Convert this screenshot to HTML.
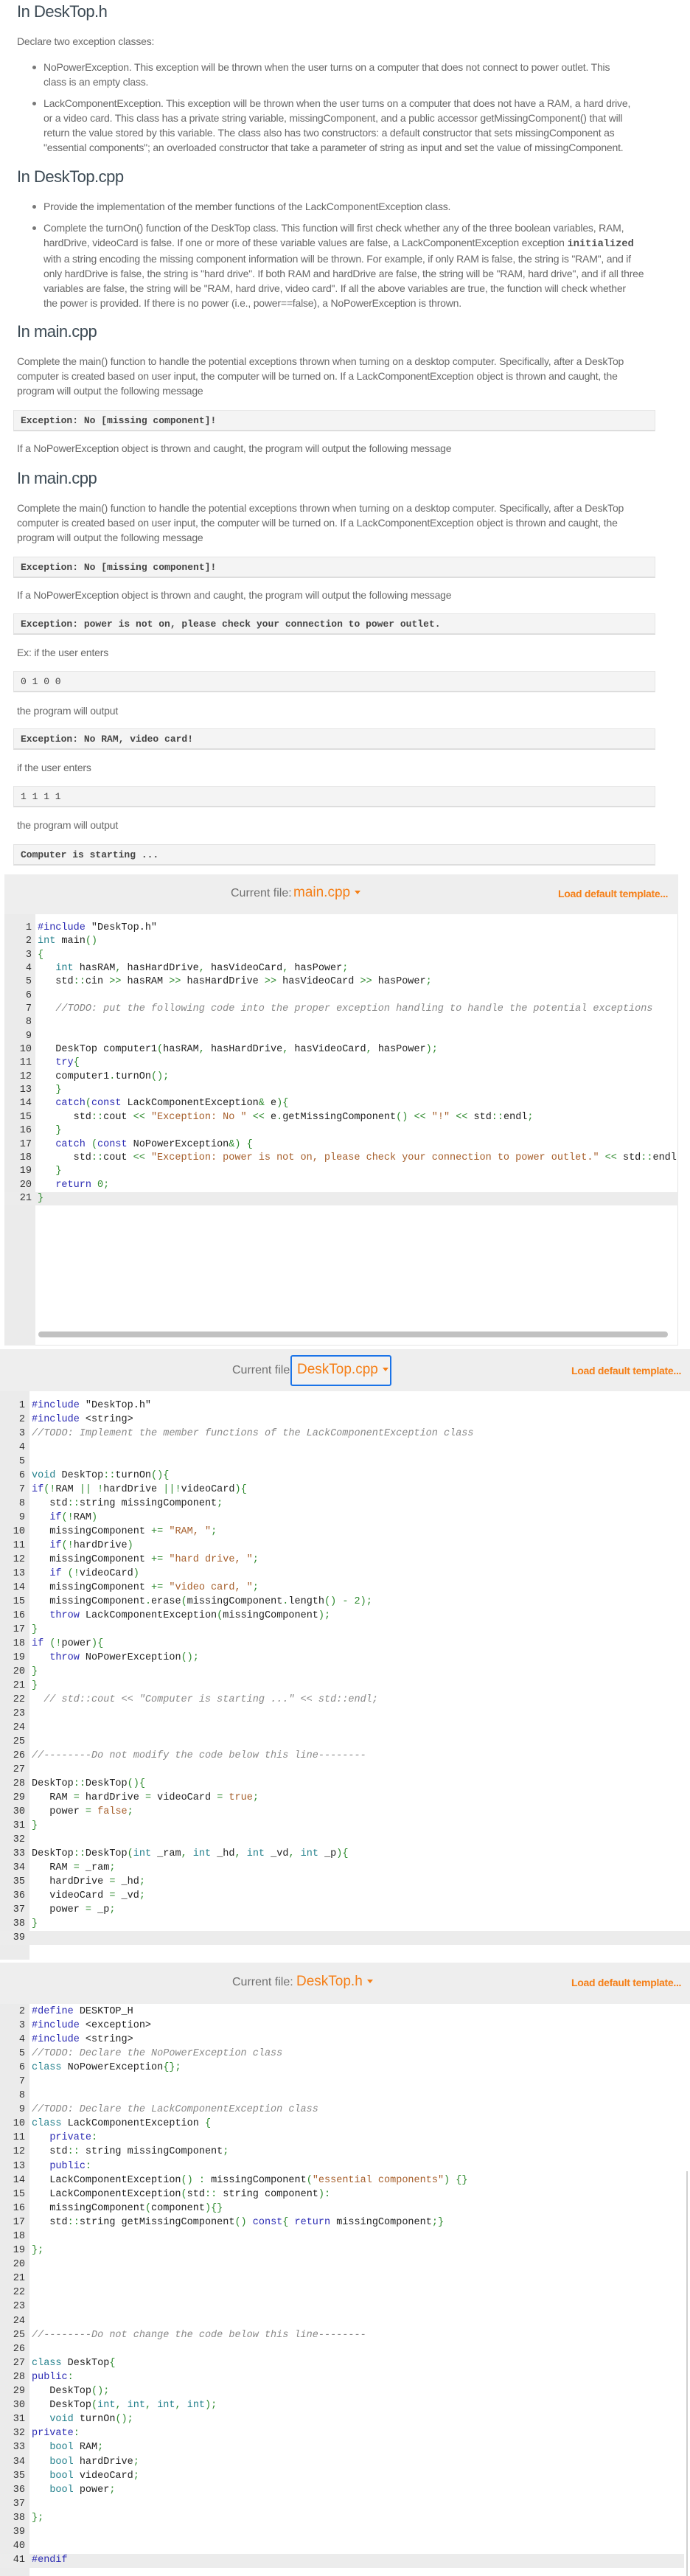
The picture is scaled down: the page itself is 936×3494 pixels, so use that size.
<!DOCTYPE html>
<html><head><meta charset="utf-8">
<style>
*{margin:0;padding:0;box-sizing:border-box}
body{width:936px;height:3494px;position:relative;background:#fff;font-family:"Liberation Sans",sans-serif;color:#666;overflow:hidden}
.t{position:absolute;left:23px;font-size:14px;line-height:20px;white-space:nowrap;color:#686868;letter-spacing:-0.2px}
.b{left:59px}
.dot{position:absolute;left:44px;width:5px;height:5px;border-radius:50%;background:#777}
h2{position:absolute;left:23px;font-size:22px;font-weight:normal;color:#3c4a54;line-height:26px;white-space:nowrap;letter-spacing:-0.5px}
.box{position:absolute;left:18px;width:871px;height:29px;background:#f4f4f4;border:1px solid #e4e4e4;border-bottom:2px solid #ddd;font-family:"Liberation Mono",monospace;font-size:13px;font-weight:bold;color:#444;line-height:27px;padding-left:9px;white-space:pre}
.box.n{font-weight:normal}
.hdr{position:absolute;background:#eeeeee}
.cf{position:absolute;font-size:16px;color:#707070;white-space:nowrap}
.fn{position:absolute;font-size:19px;color:#f57f17;white-space:nowrap}
.fn i{display:inline-block;width:0;height:0;border-left:4px solid transparent;border-right:4px solid transparent;border-top:5px solid #f57f17;margin-left:6px;vertical-align:middle}
.ld{position:absolute;font-size:14px;font-weight:bold;color:#f57f17;white-space:nowrap;letter-spacing:-0.3px}
.gut{position:absolute;background:#ebebeb}
pre{position:absolute;font-family:"Liberation Mono",monospace;font-size:13.5px;color:#222;white-space:pre}
pre.num{text-align:right;color:#333}
.k{color:#2b2bb3}.ty{color:#23808c}.s{color:#a65e2a}.p{color:#2d8a2d}.c{color:#888;font-style:italic}
.hl{position:absolute;background:#ececec}
</style></head><body>

<h2 style="top:3px">In DeskTop.h</h2>
<div class="t" style="top:46px">Declare two exception classes:</div>
<div class="dot" style="top:89px"></div>
<div class="t b" style="top:81px">NoPowerException. This exception will be thrown when the user turns on a computer that does not connect to power outlet. This<br>class is an empty class.</div>
<div class="dot" style="top:138px"></div>
<div class="t b" style="top:130px">LackComponentException. This exception will be thrown when the user turns on a computer that does not have a RAM, a hard drive,<br>or a video card. This class has a private string variable, missingComponent, and a public accessor getMissingComponent() that will<br>return the value stored by this variable. The class also has two constructors: a default constructor that sets missingComponent as<br>"essential components"; an overloaded constructor that take a parameter of string as input and set the value of missingComponent.</div>
<h2 style="top:227px">In DeskTop.cpp</h2>
<div class="dot" style="top:278px"></div>
<div class="t b" style="top:270px">Provide the implementation of the member functions of the LackComponentException class.</div>
<div class="dot" style="top:307px"></div>
<div class="t b" style="top:299px">Complete the turnOn() function of the DeskTop class. This function will first check whether any of the three boolean variables, RAM,<br>hardDrive, videoCard is false. If one or more of these variable values are false, a LackComponentException exception <b style="font-family:'Liberation Mono',monospace;color:#555">initialized</b><br>with a string encoding the missing component information will be thrown. For example, if only RAM is false, the string is "RAM", and if<br>only hardDrive is false, the string is "hard drive". If both RAM and hardDrive are false, the string will be "RAM, hard drive", and if all three<br>variables are false, the string will be "RAM, hard drive, video card". If all the above variables are true, the function will check whether<br>the power is provided. If there is no power (i.e., power==false), a NoPowerException is thrown.</div>
<h2 style="top:437px">In main.cpp</h2>
<div class="t" style="top:480px">Complete the main() function to handle the potential exceptions thrown when turning on a desktop computer. Specifically, after a DeskTop<br>computer is created based on user input, the computer will be turned on. If a LackComponentException object is thrown and caught, the<br>program will output the following message</div>
<div class="box" style="top:556px">Exception: No [missing component]!</div>
<div class="t" style="top:598px">If a NoPowerException object is thrown and caught, the program will output the following message</div>
<h2 style="top:636px">In main.cpp</h2>
<div class="t" style="top:679px">Complete the main() function to handle the potential exceptions thrown when turning on a desktop computer. Specifically, after a DeskTop<br>computer is created based on user input, the computer will be turned on. If a LackComponentException object is thrown and caught, the<br>program will output the following message</div>
<div class="box" style="top:755px">Exception: No [missing component]!</div>
<div class="t" style="top:797px">If a NoPowerException object is thrown and caught, the program will output the following message</div>
<div class="box" style="top:832px">Exception: power is not on, please check your connection to power outlet.</div>
<div class="t" style="top:875px">Ex: if the user enters</div>
<div class="box n" style="top:910px">0 1 0 0</div>
<div class="t" style="top:954px">the program will output</div>
<div class="box" style="top:988px">Exception: No RAM, video card!</div>
<div class="t" style="top:1031px">if the user enters</div>
<div class="box n" style="top:1066px">1 1 1 1</div>
<div class="t" style="top:1109px">the program will output</div>
<div class="box" style="top:1145px">Computer is starting ...</div>

<!-- Editor 1 -->
<div class="hdr" style="left:6px;top:1186px;width:914px;height:54px"></div>
<div class="cf" style="left:313px;top:1203px">Current file:</div>
<div class="fn" style="left:398px;top:1200px">main.cpp<i></i></div>
<div class="ld" style="left:757px;top:1204px">Load default template...</div>
<div style="position:absolute;left:6px;top:1240px;width:914px;height:585px;border-right:1px solid #e6e6e6;border-bottom:1px solid #e6e6e6"></div>
<div class="gut" style="left:6px;top:1240px;width:42px;height:585px"></div>
<div class="hl" style="left:6px;top:1617px;width:914px;height:18px"></div>
<div style="position:absolute;left:52px;top:1806px;width:854px;height:8px;border-radius:4px;background:#c1c1c1"></div>
<pre class="num" style="left:6px;width:37px;top:1250px;line-height:18.35px">1
2
3
4
5
6
7
8
9
10
11
12
13
14
15
16
17
18
19
20
21</pre>
<pre style="left:51px;top:1250px;line-height:18.35px;width:869px;overflow:hidden"><span class="k">#include</span> "DeskTop.h"
<span class="ty">int</span> main<span class="p">()</span>
<span class="p">{</span>
   <span class="ty">int</span> hasRAM<span class="p">,</span> hasHardDrive<span class="p">,</span> hasVideoCard<span class="p">,</span> hasPower<span class="p">;</span>
   std<span class="p">::</span>cin <span class="p">&gt;&gt;</span> hasRAM <span class="p">&gt;&gt;</span> hasHardDrive <span class="p">&gt;&gt;</span> hasVideoCard <span class="p">&gt;&gt;</span> hasPower<span class="p">;</span>

   <span class="c">//TODO: put the following code into the proper exception handling to handle the potential exceptions</span>


   DeskTop computer1<span class="p">(</span>hasRAM<span class="p">,</span> hasHardDrive<span class="p">,</span> hasVideoCard<span class="p">,</span> hasPower<span class="p">);</span>
   <span class="k">try</span><span class="p">{</span>
   computer1<span class="p">.</span>turnOn<span class="p">();</span>
   <span class="p">}</span>
   <span class="k">catch</span><span class="p">(</span><span class="k">const</span> LackComponentException<span class="p">&amp;</span> e<span class="p">){</span>
      std<span class="p">::</span>cout <span class="p">&lt;&lt;</span> <span class="s">"Exception: No "</span> <span class="p">&lt;&lt;</span> e<span class="p">.</span>getMissingComponent<span class="p">()</span> <span class="p">&lt;&lt;</span> <span class="s">"!"</span> <span class="p">&lt;&lt;</span> std<span class="p">::</span>endl<span class="p">;</span>
   <span class="p">}</span>
   <span class="k">catch</span> <span class="p">(</span><span class="k">const</span> NoPowerException<span class="p">&amp;)</span> <span class="p">{</span>
      std<span class="p">::</span>cout <span class="p">&lt;&lt;</span> <span class="s">"Exception: power is not on, please check your connection to power outlet."</span> <span class="p">&lt;&lt;</span> std<span class="p">::</span>endl
   <span class="p">}</span>
   <span class="k">return</span> <span class="p">0;</span>
<span class="p">}</span></pre>

<!-- Editor 2 -->
<div class="hdr" style="left:0;top:1830px;width:936px;height:57px"></div>
<div class="cf" style="left:315px;top:1850px">Current file</div>
<div style="position:absolute;left:394px;top:1838px;width:137px;height:42px;border:2px solid #1a73e8;border-radius:3px;background:#f2f2f2"></div>
<div class="fn" style="left:403px;top:1847px">DeskTop.cpp<i></i></div>
<div class="ld" style="left:775px;top:1851px">Load default template...</div>
<div class="gut" style="left:0;top:1887px;width:40px;height:771px"></div>
<div class="hl" style="left:0;top:2619px;width:936px;height:19px"></div>
<pre class="num" style="left:0;width:34px;top:1896.5px;line-height:19px">1
2
3
4
5
6
7
8
9
10
11
12
13
14
15
16
17
18
19
20
21
22
23
24
25
26
27
28
29
30
31
32
33
34
35
36
37
38
39</pre>
<pre style="left:43px;top:1896.5px;line-height:19px"><span class="k">#include</span> "DeskTop.h"
<span class="k">#include</span> &lt;string&gt;
<span class="c">//TODO: Implement the member functions of the LackComponentException class</span>


<span class="ty">void</span> DeskTop<span class="p">::</span>turnOn<span class="p">(){</span>
<span class="k">if</span><span class="p">(!</span>RAM <span class="p">||</span> <span class="p">!</span>hardDrive <span class="p">||!</span>videoCard<span class="p">){</span>
   std<span class="p">::</span>string missingComponent<span class="p">;</span>
   <span class="k">if</span><span class="p">(!</span>RAM<span class="p">)</span>
   missingComponent <span class="p">+=</span> <span class="s">"RAM, "</span><span class="p">;</span>
   <span class="k">if</span><span class="p">(!</span>hardDrive<span class="p">)</span>
   missingComponent <span class="p">+=</span> <span class="s">"hard drive, "</span><span class="p">;</span>
   <span class="k">if</span> <span class="p">(!</span>videoCard<span class="p">)</span>
   missingComponent <span class="p">+=</span> <span class="s">"video card, "</span><span class="p">;</span>
   missingComponent<span class="p">.</span>erase<span class="p">(</span>missingComponent<span class="p">.</span>length<span class="p">()</span> <span class="p">-</span> <span class="p">2);</span>
   <span class="k">throw</span> LackComponentException<span class="p">(</span>missingComponent<span class="p">);</span>
<span class="p">}</span>
<span class="k">if</span> <span class="p">(!</span>power<span class="p">){</span>
   <span class="k">throw</span> NoPowerException<span class="p">();</span>
<span class="p">}</span>
<span class="p">}</span>
  <span class="c">// std::cout &lt;&lt; "Computer is starting ..." &lt;&lt; std::endl;</span>



<span class="c">//--------Do not modify the code below this line--------</span>

DeskTop<span class="p">::</span>DeskTop<span class="p">(){</span>
   RAM <span class="p">=</span> hardDrive <span class="p">=</span> videoCard <span class="p">=</span> <span class="s">true</span><span class="p">;</span>
   power <span class="p">=</span> <span class="s">false</span><span class="p">;</span>
<span class="p">}</span>

DeskTop<span class="p">::</span>DeskTop<span class="p">(</span><span class="ty">int</span> _ram<span class="p">,</span> <span class="ty">int</span> _hd<span class="p">,</span> <span class="ty">int</span> _vd<span class="p">,</span> <span class="ty">int</span> _p<span class="p">){</span>
   RAM <span class="p">=</span> _ram<span class="p">;</span>
   hardDrive <span class="p">=</span> _hd<span class="p">;</span>
   videoCard <span class="p">=</span> _vd<span class="p">;</span>
   power <span class="p">=</span> _p<span class="p">;</span>
<span class="p">}</span>
</pre>

<!-- Editor 3 -->
<div class="hdr" style="left:0;top:2662px;width:936px;height:56px"></div>
<div class="cf" style="left:315px;top:2680px">Current file:</div>
<div class="fn" style="left:402px;top:2677px">DeskTop.h<i></i></div>
<div class="ld" style="left:775px;top:2681px">Load default template...</div>
<div class="gut" style="left:0;top:2718px;width:40px;height:776px"></div>
<div class="hl" style="left:0;top:3464px;width:928px;height:19px"></div>
<div style="position:absolute;left:931px;top:2945px;width:2px;height:549px;background:#d0d0d0"></div>
<pre class="num" style="left:0;width:34px;top:2718.5px;line-height:19.1px">2
3
4
5
6
7
8
9
10
11
12
13
14
15
16
17
18
19
20
21
22
23
24
25
26
27
28
29
30
31
32
33
34
35
36
37
38
39
40
41</pre>
<pre style="left:43px;top:2718.5px;line-height:19.1px"><span class="k">#define</span> DESKTOP_H
<span class="k">#include</span> &lt;exception&gt;
<span class="k">#include</span> &lt;string&gt;
<span class="c">//TODO: Declare the NoPowerException class</span>
<span class="ty">class</span> NoPowerException<span class="p">{};</span>


<span class="c">//TODO: Declare the LackComponentException class</span>
<span class="ty">class</span> LackComponentException <span class="p">{</span>
   <span class="k">private</span><span class="p">:</span>
   std<span class="p">::</span> string missingComponent<span class="p">;</span>
   <span class="k">public</span><span class="p">:</span>
   LackComponentException<span class="p">()</span> <span class="p">:</span> missingComponent<span class="p">(</span><span class="s">"essential components"</span><span class="p">)</span> <span class="p">{}</span>
   LackComponentException<span class="p">(</span>std<span class="p">::</span> string component<span class="p">):</span>
   missingComponent<span class="p">(</span>component<span class="p">){}</span>
   std<span class="p">::</span>string getMissingComponent<span class="p">()</span> <span class="k">const</span><span class="p">{</span> <span class="k">return</span> missingComponent<span class="p">;}</span>

<span class="p">};</span>





<span class="c">//--------Do not change the code below this line--------</span>

<span class="ty">class</span> DeskTop<span class="p">{</span>
<span class="k">public</span><span class="p">:</span>
   DeskTop<span class="p">();</span>
   DeskTop<span class="p">(</span><span class="ty">int</span><span class="p">,</span> <span class="ty">int</span><span class="p">,</span> <span class="ty">int</span><span class="p">,</span> <span class="ty">int</span><span class="p">);</span>
   <span class="ty">void</span> turnOn<span class="p">();</span>
<span class="k">private</span><span class="p">:</span>
   <span class="ty">bool</span> RAM<span class="p">;</span>
   <span class="ty">bool</span> hardDrive<span class="p">;</span>
   <span class="ty">bool</span> videoCard<span class="p">;</span>
   <span class="ty">bool</span> power<span class="p">;</span>

<span class="p">};</span>


<span class="k">#endif</span></pre>
</body></html>
